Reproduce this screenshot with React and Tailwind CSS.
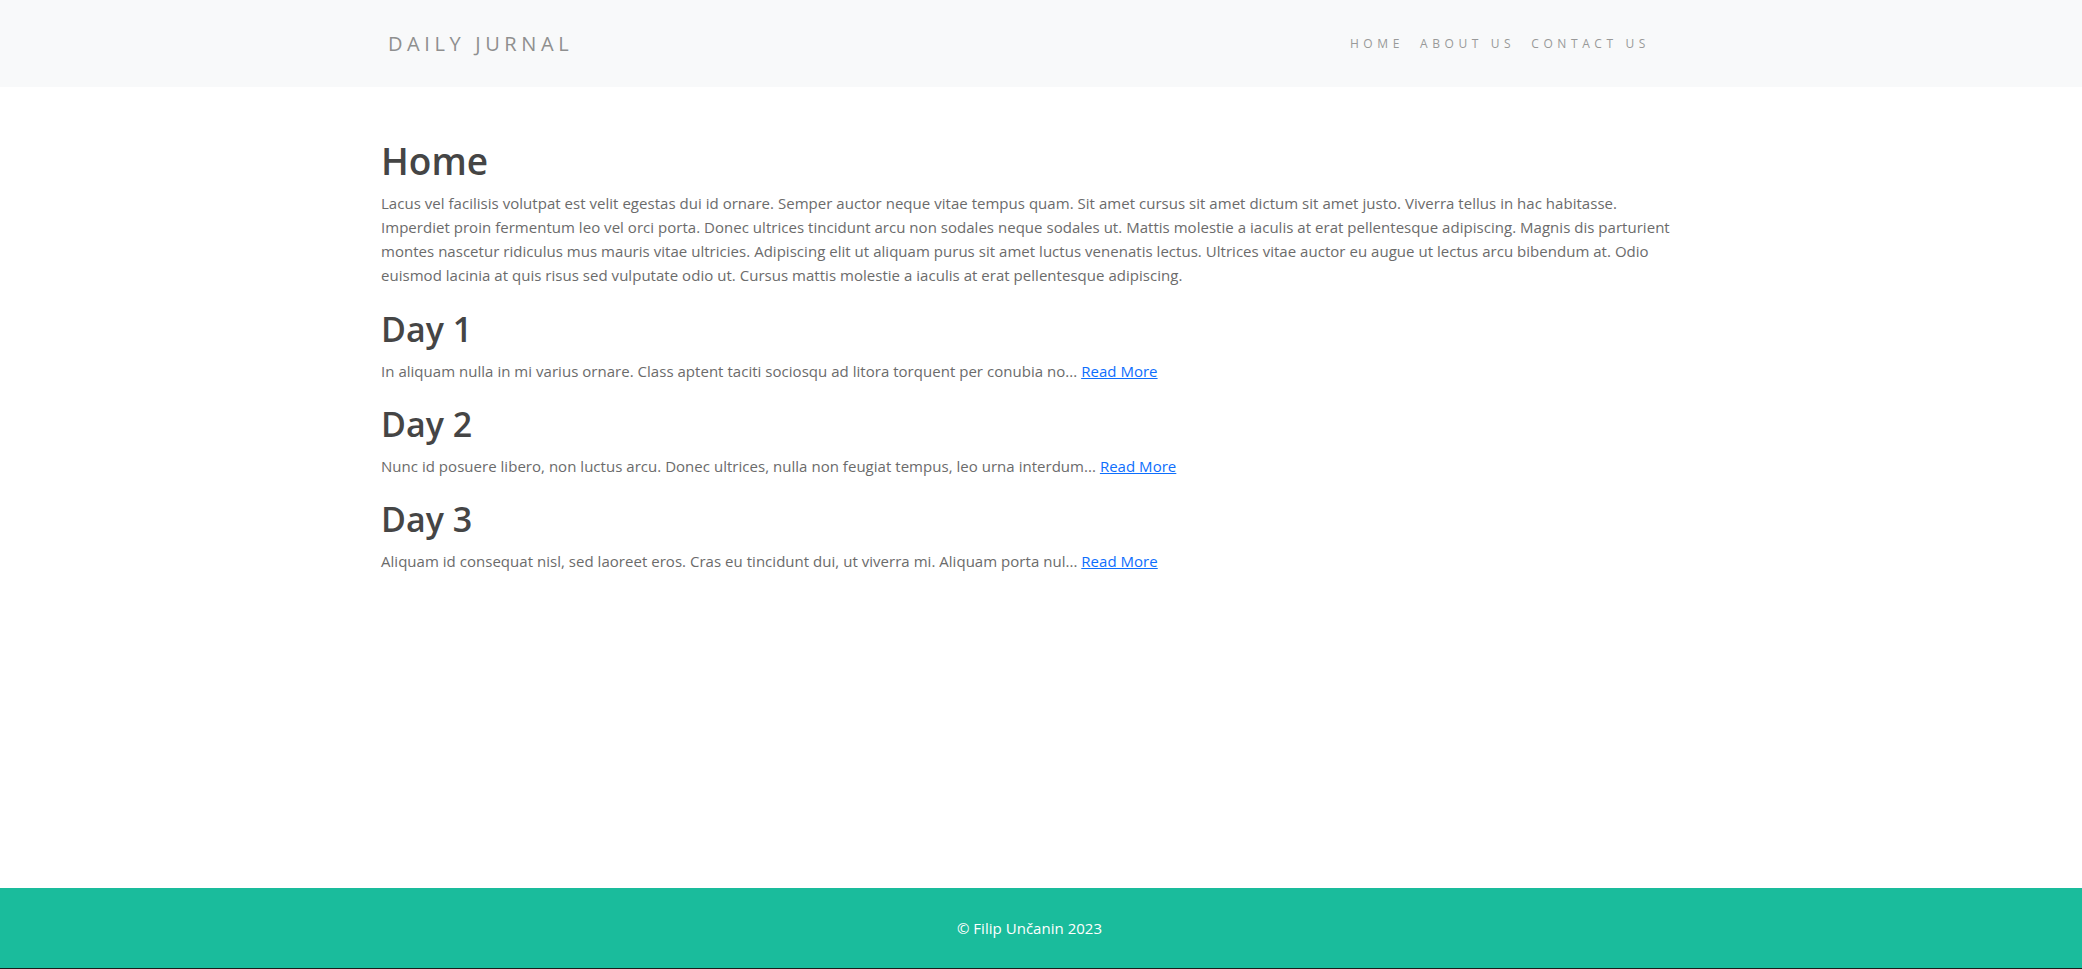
const posts = [
  {
    title: 'Day 1',
    text: 'In aliquam nulla in mi varius ornare. Class aptent taciti sociosqu ad litora torquent per conubia no...',
  },
  {
    title: 'Day 2',
    text: 'Nunc id posuere libero, non luctus arcu. Donec ultrices, nulla non feugiat tempus, leo urna interdum...',
  },
  {
    title: 'Day 3',
    text: 'Aliquam id consequat nisl, sed laoreet eros. Cras eu tincidunt dui, ut viverra mi. Aliquam porta nul...',
  },
];

const homeText =
  'Lacus vel facilisis volutpat est velit egestas dui id ornare. Semper auctor neque vitae tempus quam. Sit amet cursus sit amet dictum sit amet justo. Viverra tellus in hac habitasse. Imperdiet proin fermentum leo vel orci porta. Donec ultrices tincidunt arcu non sodales neque sodales ut. Mattis molestie a iaculis at erat pellentesque adipiscing. Magnis dis parturient montes nascetur ridiculus mus mauris vitae ultricies. Adipiscing elit ut aliquam purus sit amet luctus venenatis lectus. Ultrices vitae auctor eu augue ut lectus arcu bibendum at. Odio euismod lacinia at quis risus sed vulputate odio ut. Cursus mattis molestie a iaculis at erat pellentesque adipiscing.';

const Header = () => (
  <header className="h-[87px] bg-[#f8f9fa]">
    <nav className="w-[1320px] h-full mx-auto flex items-center justify-between">
      <a href="#" className="pl-[7px] text-[20px] tracking-[4.6px] text-[#8f8f8f] uppercase">
        Daily Jurnal
      </a>
      <ul className="flex items-center gap-4 pr-[51px] text-[12px] tracking-[4.6px] text-[#999999] uppercase">
        <li><a href="#">Home</a></li>
        <li><a href="#">About us</a></li>
        <li><a href="#">Contact us</a></li>
      </ul>
    </nav>
  </header>
);

const Post = ({ title, text }) => (
  <div>
    <h2 className="text-[34px] leading-[1.2] font-semibold text-[#454545] mb-[9px]">{title}</h2>
    <p className="mb-[21px]">
      {text} <a href="#" className="text-[#0d6efd] underline">Read More</a>
    </p>
  </div>
);

export default function App() {
  return (
    <div
      className="min-h-screen flex flex-col bg-white text-[15px] leading-[24px] tracking-[0.03px] text-[#6b6b6b]"
      style={{ fontFamily: '"Open Sans", "Noto Sans", sans-serif' }}
    >
      <Header />

      <main className="flex-1 w-[1320px] mx-auto pt-[52px] pr-[20px]">
        <h1 className="text-[37px] leading-[1.2] font-semibold text-[#454545] mb-[8px]">Home</h1>
        <p className="mb-[22px]">{homeText}</p>

        {posts.map((post) => (
          <Post key={post.title} {...post} />
        ))}
      </main>

      <footer className="h-[81px] bg-[#1abc9c] border-b border-[#1c1c1c] flex items-center justify-center">
        <p className="pr-[23px] text-white">© Filip Unčanin 2023</p>
      </footer>
    </div>
  );
}
